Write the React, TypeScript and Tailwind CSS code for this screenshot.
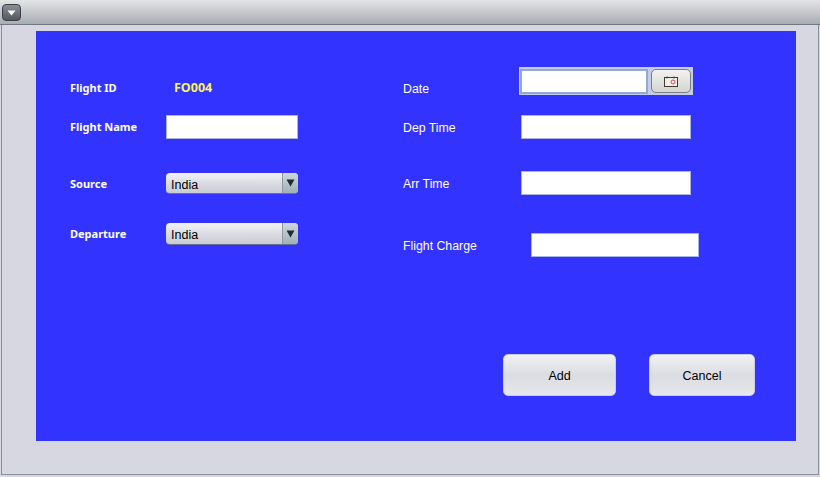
const boldLabel = "w-[96px] pt-[1px] font-['Noto_Sans'] text-[11px] font-bold text-white";
const plainLabel = "pt-[2px] font-['Liberation_Sans'] text-[12.3px] text-white";
const fieldClass = "h-6 border border-[#a9b4e6] bg-white";

const Combo = () => (
  <div className="flex h-full w-[132px] overflow-hidden rounded-[4px] border-b border-[#6a6f9a] bg-gradient-to-b from-[#f3f4f6] via-[#dcdde3] to-[#c9cbd4]">
    <span className="flex-1 pl-[5px] pt-[1px] font-['Liberation_Sans'] text-[12.5px] leading-[22px] text-black">India</span>
    <span className="flex w-[16px] items-center justify-center border-l border-[#8d9aa3] bg-gradient-to-b from-[#cfd8dc] to-[#9fb0b8]">
      <svg width="9" height="8" viewBox="0 0 9 8">
        <path d="M0.5 0.5h8L4.5 7.5z" fill="#1f2a33" />
      </svg>
    </span>
  </div>
);

const PushButton = ({ label, width }: { label: string; width: string }) => (
  <button
    className={`h-[42px] ${width} rounded-[5px] border border-[#c9cbe0] bg-gradient-to-b from-[#f0f1f3] via-[#dcdde2] to-[#e6e7ea] pt-[2px] font-['Liberation_Sans'] text-[12.5px] text-black`}
  >
    {label}
  </button>
);

export default function App() {
  return (
    <div className="flex h-[477px] w-[820px] flex-col overflow-hidden bg-[#d6d7e0]">
      {/* title bar */}
      <div className="flex h-[25px] shrink-0 items-start border-b border-[#6f7880] bg-gradient-to-b from-[#e4e5e7] via-[#c6c8cc] to-[#a9adb3] pl-[2px] pt-[4px]">
        <button className="flex h-[17px] w-[19px] items-center justify-center rounded-[4px] border border-[#3c4046] bg-gradient-to-b from-[#8b8f96] to-[#53575e]">
          <svg width="9" height="6" viewBox="0 0 9 6">
            <path d="M0.5 0.5h8L4.5 5.5z" fill="#ffffff" />
          </svg>
        </button>
      </div>

      {/* frame body */}
      <div className="mb-[2px] ml-[1px] mr-[1px] flex-1 border-x border-b border-[#8b9098] pl-[34px] pt-[6px]">
        <div className="flex h-[410px] w-[760px] bg-[#3333ff] pl-[34px] pt-[36px]">
          <div className="flex w-[333px] flex-col">
            <div className="flex h-[42px] items-center">
              <span className={boldLabel}>Flight ID</span>
              <span className="ml-[8px] pt-[1px] font-['Noto_Sans'] text-[12.5px] font-bold text-[#f7f75a]">FO004</span>
            </div>
            <div className="mt-[6px] flex h-6 items-center">
              <span className={boldLabel}>Flight Name</span>
              <div className={`${fieldClass} w-[132px]`} />
            </div>
            <div className="mt-[34px] flex h-[21px] items-center">
              <span className={boldLabel}>Source</span>
              <Combo />
            </div>
            <div className="mt-[29px] flex h-[22px] items-center">
              <span className={boldLabel}>Departure</span>
              <Combo />
            </div>
          </div>

          <div className="flex w-[360px] flex-col">
            <div className="flex h-[42px] items-center">
              <span className={`${plainLabel} w-[116px]`}>Date</span>
              <div className="flex h-[28px] w-[174px] items-center gap-[3px] self-start bg-[#c5cde6] pl-[1px]">
                <div className="h-[25px] w-[128px] border-2 border-[#8fa9d8] bg-white" />
                <div className="flex h-[24px] w-[40px] items-center justify-center rounded-[5px] border border-[#7d8080] bg-gradient-to-b from-[#f2f2f0] to-[#d4d4d2]">
                  <svg width="14" height="11" viewBox="0 0 14 11">
                    <rect x="0.5" y="1.5" width="13" height="9" fill="#f4f1e4" stroke="#3a3a3a" />
                    <path d="M3 0.5v2M10 0.5v2" stroke="#3a3a3a" />
                    <circle cx="9" cy="6" r="2" fill="none" stroke="#d8406a" />
                  </svg>
                </div>
              </div>
            </div>
            <div className="mt-[6px] flex h-6 items-center">
              <span className={`${plainLabel} w-[118px]`}>Dep Time</span>
              <div className={`${fieldClass} w-[170px]`} />
            </div>
            <div className="mt-[32px] flex h-6 items-center">
              <span className={`${plainLabel} w-[118px]`}>Arr Time</span>
              <div className={`${fieldClass} w-[170px]`} />
            </div>
            <div className="mt-[38px] flex h-6 items-center">
              <span className={`${plainLabel} w-[128px]`}>Flight Charge</span>
              <div className={`${fieldClass} w-[168px]`} />
            </div>
            <div className="ml-[100px] mt-[97px] flex gap-[33px]">
              <PushButton label="Add" width="w-[113px]" />
              <PushButton label="Cancel" width="w-[106px]" />
            </div>
          </div>
        </div>
      </div>
    </div>
  );
}
